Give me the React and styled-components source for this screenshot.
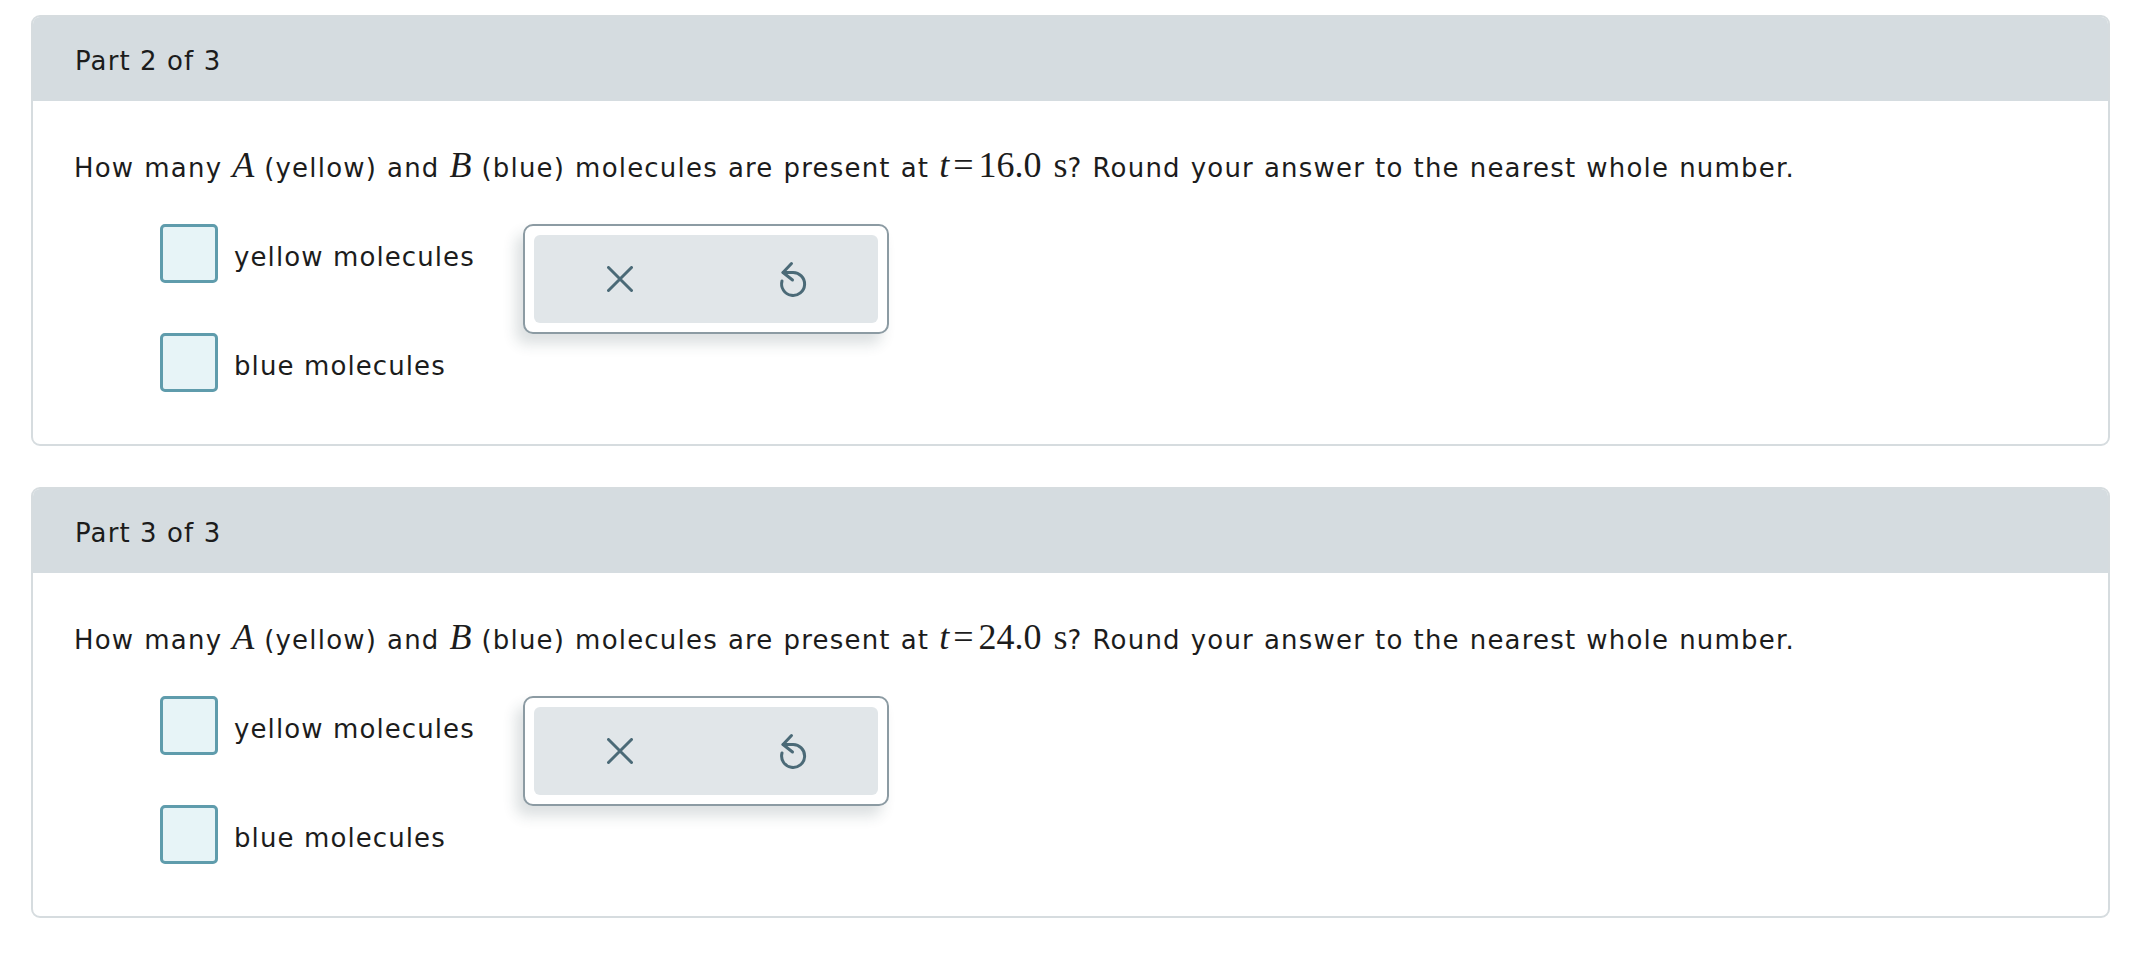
import React from 'react';
import styled, { createGlobalStyle } from 'styled-components';

const GlobalStyle = createGlobalStyle`
  html, body {
    margin: 0;
    padding: 0;
    background: #ffffff;
  }
  body {
    font-family: 'DejaVu Sans', Verdana, sans-serif;
    color: #1c1c1c;
  }
`;

const Page = styled.main`
  display: flex;
  flex-direction: column;
  gap: 41px;
  padding: 15px 33px 40px 31px;
`;

const Card = styled.section`
  border: 2px solid #d6dcdf;
  border-radius: 9px;
  overflow: hidden;
  background: #ffffff;
`;

const CardHeader = styled.header`
  box-sizing: border-box;
  height: 86px;
  margin: -2px -2px 0;
  padding: 5px 0 0 44px;
  display: flex;
  align-items: center;
  background: #d5dce0;
  font-size: 26px;
  letter-spacing: 1.1px;
`;

const CardBody = styled.div`
  padding: 46px 41px 52px;
`;

const Question = styled.p`
  margin: 0;
  font-size: 26px;
  line-height: 36px;
  letter-spacing: 1.2px;
  word-spacing: 0.5px;
`;

const MathVar = styled.span`
  font-family: 'Liberation Serif', 'Times New Roman', serif;
  font-style: ${(p) => (p.$italic ? 'italic' : 'normal')};
  font-size: 36px;
  line-height: 1;
  letter-spacing: 0;
  margin: ${(p) => p.$gap || '0'};
`;

const Answer = styled.div`
  display: flex;
  align-items: flex-start;
  margin: 38px 0 0 86px;
`;

const Inputs = styled.div`
  display: flex;
  flex-direction: column;
  gap: 50px;
`;

const InputRow = styled.label`
  display: flex;
  align-items: center;
  gap: 16px;
  font-size: 26px;
  letter-spacing: 1.1px;
`;

const LabelText = styled.span`
  padding-top: 6px;
`;

const Box = styled.span`
  box-sizing: border-box;
  flex: none;
  width: 58px;
  height: 59px;
  border: 3px solid #5f9cac;
  border-radius: 5px;
  background: #e7f4f7;
`;

const Panel = styled.div`
  box-sizing: border-box;
  width: 366px;
  height: 110px;
  margin-left: 48px;
  padding: 9px;
  border: 2px solid #8c9ba3;
  border-radius: 10px;
  background: #ffffff;
  box-shadow: -7px 10px 14px rgba(40, 60, 70, 0.16);
`;

const PanelInner = styled.div`
  display: grid;
  grid-template-columns: 1fr 1fr;
  height: 100%;
  border-radius: 6px;
  background: #e1e6e9;
`;

const IconButton = styled.button`
  display: flex;
  align-items: center;
  justify-content: center;
  border: 0;
  padding: 0;
  background: transparent;
  color: #4b6a77;
  cursor: pointer;
`;

const CloseIcon = () => (
  <svg width="26" height="26" viewBox="0 0 26 26">
    <path d="M1.5 1.5 L24.5 24.5 M24.5 1.5 L1.5 24.5" stroke="currentColor" strokeWidth="3" strokeLinecap="round" fill="none" />
  </svg>
);

const UndoIcon = () => (
  <svg width="30" height="38" viewBox="16 11 30 38">
    <path
      d="M21 32 A11.5 11.5 0 1 0 31.5 23.5 L22 23.5"
      stroke="currentColor"
      strokeWidth="3"
      strokeLinecap="round"
      strokeLinejoin="round"
      fill="none"
    />
    <path
      d="M30.5 14.5 L22 23.5 L31.5 31"
      stroke="currentColor"
      strokeWidth="3"
      strokeLinecap="round"
      strokeLinejoin="round"
      fill="none"
    />
  </svg>
);

const parts = [
  { part: 2, time: '16.0' },
  { part: 3, time: '24.0' },
];

const PartCard = ({ part, time }) => (
  <Card>
    <CardHeader>Part {part} of 3</CardHeader>
    <CardBody>
      <Question>
        How many <MathVar $italic>A</MathVar> (yellow) and <MathVar $italic>B</MathVar> (blue) molecules are present at{' '}
        <MathVar $italic>t</MathVar>
        <MathVar $gap="0 5px 0 4px">=</MathVar>
        <MathVar>{time}</MathVar>
        <MathVar $gap="0 0 0 12px">s</MathVar>? Round your answer to the nearest whole number.
      </Question>
      <Answer>
        <Inputs>
          <InputRow>
            <Box />
            <LabelText>yellow molecules</LabelText>
          </InputRow>
          <InputRow>
            <Box />
            <LabelText>blue molecules</LabelText>
          </InputRow>
        </Inputs>
        <Panel>
          <PanelInner>
            <IconButton aria-label="Clear">
              <CloseIcon />
            </IconButton>
            <IconButton aria-label="Undo">
              <UndoIcon />
            </IconButton>
          </PanelInner>
        </Panel>
      </Answer>
    </CardBody>
  </Card>
);

const App = () => (
  <>
    <GlobalStyle />
    <Page>
      {parts.map((p) => (
        <PartCard key={p.part} {...p} />
      ))}
    </Page>
  </>
);

export default App;
